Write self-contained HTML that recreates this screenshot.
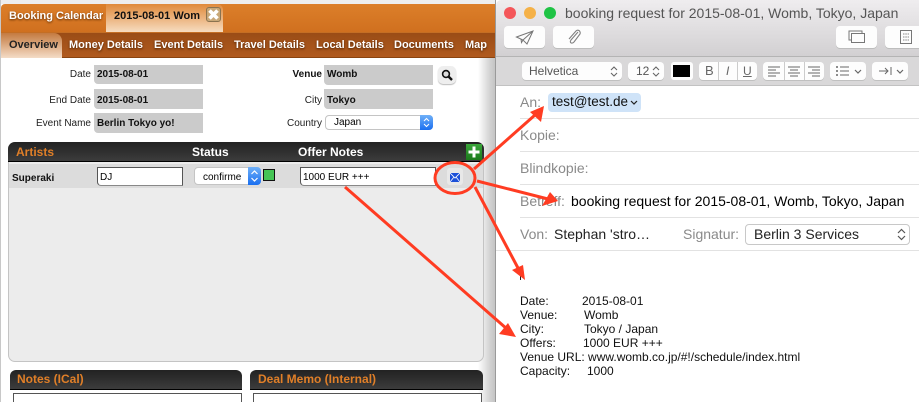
<!DOCTYPE html>
<html><head><meta charset="utf-8"><style>
html,body{margin:0;padding:0}
body{width:919px;height:402px;overflow:hidden;position:relative;background:#fff;font-family:"Liberation Sans",sans-serif;color:#000}
.a{position:absolute;white-space:nowrap}
.tb{font-size:11px;font-weight:bold;color:#fff;text-shadow:0 1px 2px #4a2000;top:38px;line-height:14px}
.lb{font-size:10px;line-height:14px;text-align:right;color:#222}
.ro{position:absolute;background:#cbcbcb;font-size:10px;font-weight:bold;padding-left:3px;box-sizing:border-box;border-bottom-left-radius:4px;color:#111}
.hd{position:absolute;background:linear-gradient(#222,#3c3c3c);font-size:12px;font-weight:bold;color:#e07f28;line-height:20px;box-sizing:border-box;border-bottom:1px solid #000}
.wh{color:#fff}
.inp{position:absolute;background:#fff;border:1px solid #555;border-bottom-color:#888;border-bottom-left-radius:4px;box-sizing:border-box;font-size:10px;line-height:20px;padding-left:2px}
.sel{position:absolute;background:#fff;border:1px solid #c4c4c4;border-radius:4px;box-sizing:border-box;font-size:10px;line-height:14px}
.blue{position:absolute;right:-1px;top:-1px;bottom:-1px;width:13px;background:linear-gradient(#6fb0f8,#1a6ff0);border-radius:0 4px 4px 0;color:#fff}
.m{position:absolute;font-size:14px;line-height:16px;white-space:nowrap}
.g{color:#8a8a8a}
.hr{position:absolute;height:1px;background:#e2e2e2}
.btn{position:absolute;background:#fdfdfd;border-radius:4px;box-shadow:0 1px 0 #bdbdbd}
.fb{position:absolute;background:#fdfdfd;border-radius:4px;top:62px;height:18px;box-shadow:0 1px 0 #c0c0c0;font-size:12px;line-height:18px;color:#555}
.d{position:absolute;left:520px;font-size:12px;line-height:14px;white-space:nowrap;color:#111}
</style></head><body>
<!-- left window -->
<div class="a" style="left:0;top:0;width:495px;height:402px;background:linear-gradient(90deg,#fff 0,#fff 478px,#d2d2d2 490px,#c4c4c4 495px)"></div>
<div class="a" style="left:0;top:0;width:495px;height:4px;background:#eee"></div>
<div class="a" style="left:0;top:0;width:1px;height:402px;background:#c8c8c8"></div>
<div class="a" style="left:1px;top:4px;width:494px;height:28px;background:linear-gradient(#dc7f2a,#d0701f);border-top-left-radius:4px"></div>
<div class="a" style="left:106px;top:4px;width:117px;height:28px;background:linear-gradient(#e08a3a,#f6dcc0);border-radius:0 6px 0 0"></div>
<div class="a" style="left:9px;top:9px;font-size:11px;line-height:14px;font-weight:bold;color:#fff;text-shadow:0 1px 2px #5a2a00">Booking Calendar</div>
<div class="a" style="left:114px;top:9px;font-size:11px;line-height:14px;font-weight:bold;color:#111">2015-08-01 Wom</div>
<div class="a" style="left:206px;top:7px;width:15px;height:15px;background:#c9a878;border:1px solid #8a7350;border-radius:3px;box-sizing:border-box"></div>
<svg class="a" style="left:206px;top:7px" width="15" height="15"><path d="M3.5 3.5 L11.5 11.5 M11.5 3.5 L3.5 11.5" stroke="#fff" stroke-width="3.6"/></svg>
<div class="a" style="left:1px;top:32px;width:494px;height:26px;background:linear-gradient(#9a4c16,#b05a1e);border-top:1px solid #c46e24;border-bottom:1px solid #8a4410;box-sizing:border-box"></div>
<div class="a" style="left:1px;top:33px;width:61px;height:25px;background:linear-gradient(#c47a40,#f4dcc6);border-radius:0 8px 0 0"></div>
<div class="a tb" style="left:9px;color:#222;text-shadow:none">Overview</div>
<div class="a tb" style="left:69px">Money Details</div>
<div class="a tb" style="left:154px">Event Details</div>
<div class="a tb" style="left:234px">Travel Details</div>
<div class="a tb" style="left:316px">Local Details</div>
<div class="a tb" style="left:394px">Documents</div>
<div class="a tb" style="left:465px">Map</div>

<div class="a lb" style="left:30px;width:61px;top:68px">Date</div>
<div class="a lb" style="left:30px;width:61px;top:94px">End Date</div>
<div class="a lb" style="left:20px;width:71px;top:117px">Event Name</div>
<div class="ro" style="left:94px;top:65px;width:109px;height:19px;line-height:20px">2015-08-01</div>
<div class="ro" style="left:94px;top:89px;width:109px;height:20px;line-height:23px">2015-08-01</div>
<div class="ro" style="left:94px;top:113px;width:109px;height:20px;line-height:22px">Berlin Tokyo yo!</div>
<div class="a lb" style="left:262px;width:60px;top:68px;font-weight:bold;color:#111">Venue</div>
<div class="a lb" style="left:262px;width:60px;top:94px">City</div>
<div class="a lb" style="left:262px;width:60px;top:117px">Country</div>
<div class="ro" style="left:324px;top:65px;width:109px;height:20px;line-height:20px">Womb</div>
<div class="ro" style="left:324px;top:89px;width:109px;height:20px;line-height:23px">Tokyo</div>
<div class="sel" style="left:325px;top:115px;width:108px;height:15px;padding-left:8px;line-height:14px">Japan<div class="blue"><svg width="13" height="15" style="display:block"><path d="M4 6 L6.5 3.5 L9 6 M4 9 L6.5 11.5 L9 9" fill="none" stroke="#fff" stroke-width="1"/></svg></div></div>
<div class="a" style="left:438px;top:66px;width:18px;height:18px;background:#eee;border-radius:5px;box-shadow:0 1px 1px #bbb"></div>
<svg class="a" style="left:438px;top:66px" width="18" height="18"><circle cx="8" cy="8" r="3.4" fill="#ddd" stroke="#111" stroke-width="1.6"/><path d="M10.5 10.5 L14 14" stroke="#111" stroke-width="2.4"/></svg>

<!-- artists panel -->
<div class="a" style="left:8px;top:142px;width:476px;height:220px;background:#ececec;border:1px solid #c4c4c4;border-radius:7px;box-sizing:border-box"></div>
<div class="hd" style="left:8px;top:142px;width:476px;height:20px;border-radius:7px 7px 0 0"></div>
<div class="a" style="left:16px;top:142px;font-size:12px;font-weight:bold;line-height:21px;color:#e07f28">Artists</div>
<div class="a wh" style="left:192px;top:142px;font-size:12px;font-weight:bold;line-height:21px">Status</div>
<div class="a wh" style="left:298px;top:142px;font-size:12px;font-weight:bold;line-height:21px">Offer Notes</div>
<div class="a" style="left:466px;top:144px;width:16px;height:16px;background:linear-gradient(#3aa53a,#1c7a1c)"></div>
<svg class="a" style="left:466px;top:144px" width="16" height="16"><path d="M8 2.5 V13.5 M2.5 8 H13.5" stroke="#fff" stroke-width="3"/></svg>
<div class="a" style="left:9px;top:164px;width:474px;height:24px;background:#dcdcdc"></div>
<div class="a" style="left:12px;top:173px;font-size:10px;font-weight:bold;line-height:12px;color:#111">Superaki</div>
<div class="inp" style="left:97px;top:167px;width:86px;height:19px">DJ</div>
<div class="sel" style="left:194px;top:167px;width:67px;height:18px;padding-left:8px;line-height:20px">confirme<div class="blue"><svg width="13" height="18" style="display:block"><path d="M3.5 7 L6.5 4 L9.5 7 M3.5 11 L6.5 14 L9.5 11" fill="none" stroke="#fff" stroke-width="1.2"/></svg></div></div>
<div class="a" style="left:263px;top:169px;width:12px;height:12px;background:#45c455;border:1px solid #111;box-sizing:border-box"></div>
<div class="inp" style="left:300px;top:167px;width:136px;height:19px">1000 EUR +++</div>
<div class="a" style="left:447px;top:168px;width:16px;height:17px;background:#e8e8e8;border-radius:3px"></div>
<svg class="a" style="left:450px;top:173px" width="10" height="9"><rect width="10" height="9" fill="#1c50d8"/><path d="M0 0 L5 5 L10 0 M0 9 L4 4 M10 9 L6 4" fill="none" stroke="#fff" stroke-width=".8"/></svg>

<!-- bottom panels -->
<div class="hd" style="left:10px;top:370px;width:232px;height:20px;border-radius:6px 6px 0 0;padding-left:7px;line-height:19px">Notes (ICal)</div>
<div class="hd" style="left:250px;top:370px;width:233px;height:20px;border-radius:6px 6px 0 0;padding-left:8px;line-height:19px">Deal Memo (Internal)</div>
<div class="a" style="left:13px;top:393px;width:229px;height:9px;background:#fff;border:1px solid #555;border-bottom:none;box-sizing:border-box"></div>
<div class="a" style="left:253px;top:393px;width:229px;height:9px;background:#fff;border:1px solid #555;border-bottom:none;box-sizing:border-box"></div>

<!-- mail window -->
<div class="a" style="left:495px;top:0;width:424px;height:402px;background:#fff;border-left:1px solid #9a9a9a;box-sizing:border-box"></div>
<div class="a" style="left:496px;top:0;width:423px;height:57px;background:linear-gradient(#efedef,#d2d0d2);border-bottom:1px solid #b4b4b4;box-sizing:border-box;border-top-left-radius:5px"></div>
<div class="a" style="left:496px;top:57px;width:423px;height:29px;background:#d9d8d9;border-bottom:1px solid #c2c2c2;box-sizing:border-box"></div>
<div class="a" style="left:504px;top:7px;width:12px;height:12px;border-radius:50%;background:#f4565a"></div>
<div class="a" style="left:524px;top:7px;width:12px;height:12px;border-radius:50%;background:#f5b148"></div>
<div class="a" style="left:544px;top:7px;width:12px;height:12px;border-radius:50%;background:#1fc345"></div>
<div class="a" style="left:565px;top:5px;font-size:14px;line-height:17px;color:#555">booking request for 2015-08-01, Womb, Tokyo, Japan</div>
<div class="btn" style="left:504px;top:26px;width:41px;height:22px"></div>
<div class="btn" style="left:553px;top:26px;width:41px;height:22px"></div>
<div class="btn" style="left:836px;top:26px;width:41px;height:22px"></div>
<div class="btn" style="left:885px;top:26px;width:34px;height:22px;border-radius:4px 0 0 4px"></div>
<svg class="a" style="left:515px;top:30px" width="20" height="15"><path d="M1.5 7 L18 1 L12 14 L8 10 Z M8 10 L18 1 M8 10 L6.5 12.5 L6 9" fill="none" stroke="#777" stroke-width="1"/></svg>
<svg class="a" style="left:566px;top:29px" width="16" height="17"><path d="M12 3 L5 11 C3 14 6 15 8 13 L14 5 C15 2 12 0 10 2 L3 10" fill="none" stroke="#808080" stroke-width="1.1"/></svg>
<svg class="a" style="left:848px;top:30px" width="18" height="14"><rect x="1" y="1" width="13" height="9" fill="none" stroke="#777"/><rect x="3.5" y="3.5" width="13" height="9" fill="#fdfdfd" stroke="#777"/></svg>
<svg class="a" style="left:900px;top:30px" width="13" height="15"><rect x=".5" y=".5" width="11" height="13" fill="none" stroke="#777"/><path d="M3 4 H9 M3 7 H9 M3 10 H9" stroke="#888" stroke-dasharray="1.5 .8"/></svg>

<div class="fb" style="left:522px;width:100px;padding-left:7px;box-sizing:border-box">Helvetica</div>
<div class="fb" style="left:628px;width:36px;padding-left:8px;box-sizing:border-box">12</div>
<svg class="a" style="left:610px;top:65px" width="8" height="13"><path d="M1 5 L4 2 L7 5 M1 8 L4 11 L7 8" fill="none" stroke="#666" stroke-width="1.1"/></svg>
<svg class="a" style="left:652px;top:65px" width="8" height="13"><path d="M1 5 L4 2 L7 5 M1 8 L4 11 L7 8" fill="none" stroke="#666" stroke-width="1.1"/></svg>
<div class="a" style="left:671px;top:62px;width:22px;height:18px;background:#fdfdfd;border-radius:3px"></div>
<div class="a" style="left:673px;top:65px;width:17px;height:12px;background:#000"></div>
<div class="fb" style="left:699px;width:58px"></div>
<div class="a" style="left:718px;top:62px;width:1px;height:18px;background:#ccc"></div><div class="a" style="left:737px;top:62px;width:1px;height:18px;background:#ccc"></div>
<div class="a" style="left:705px;top:63px;font-size:13px;line-height:16px;color:#666">B</div>
<div class="a" style="left:726px;top:63px;font-size:12px;line-height:16px;font-style:italic;color:#666">I</div>
<div class="a" style="left:743px;top:63px;font-size:12px;line-height:16px;text-decoration:underline;color:#666">U</div>
<div class="fb" style="left:763px;width:61px"></div>
<svg class="a" style="left:763px;top:62px" width="61" height="18"><path d="M21.5 0 V18 M41.5 0 V18" stroke="#ccc"/><path d="M5 5 H17 M5 8 H13 M5 11 H17 M5 14 H13 M25 5 H37 M27 8 H35 M25 11 H37 M27 14 H35 M45 5 H57 M49 8 H57 M45 11 H57 M49 14 H57" stroke="#666"/></svg>
<div class="fb" style="left:830px;width:36px"></div>
<svg class="a" style="left:830px;top:62px" width="36" height="18"><path d="M10 5 H19 M10 9 H19 M10 13 H19" stroke="#666"/><path d="M6 5 H8 M6 9 H8 M6 13 H8" stroke="#666" stroke-width="1.5"/><path d="M25 8 L28 11 L31 8" fill="none" stroke="#666" stroke-width="1.2"/></svg>
<div class="fb" style="left:872px;width:36px"></div>
<svg class="a" style="left:872px;top:62px" width="36" height="18"><path d="M7 9 H16 M13 6 L16 9 L13 12 M19 5 V13" fill="none" stroke="#666"/><path d="M25 8 L28 11 L31 8" fill="none" stroke="#666" stroke-width="1.2"/></svg>

<div class="m g" style="left:520px;top:94px">An:</div>
<div class="a" style="left:548px;top:93px;width:93px;height:19px;background:#cfe3f8;border-radius:4px"></div>
<div class="m" style="left:552px;top:94px;color:#111;font-size:13.5px">test@test.de</div>
<svg class="a" style="left:630px;top:99px" width="8" height="7"><path d="M1 2 L4 5 L7 2" fill="none" stroke="#222" stroke-width="1.2"/></svg>
<div class="hr" style="left:520px;top:118px;width:399px"></div>
<div class="m g" style="left:520px;top:127px">Kopie:</div>
<div class="hr" style="left:520px;top:151px;width:399px"></div>
<div class="m g" style="left:520px;top:160px">Blindkopie:</div>
<div class="hr" style="left:520px;top:184px;width:399px"></div>
<div class="m g" style="left:520px;top:193px">Betreff:</div>
<div class="m" style="left:571px;top:193px">booking request for 2015-08-01, Womb, Tokyo, Japan</div>
<div class="hr" style="left:520px;top:217px;width:399px"></div>
<div class="m g" style="left:520px;top:226px">Von:</div>
<div class="m" style="left:554px;top:226px;color:#222">Stephan 'stro…</div>
<div class="m g" style="left:683px;top:226px">Signatur:</div>
<div class="a" style="left:745px;top:224px;width:165px;height:21px;background:#fff;border:1px solid #c8c8c8;border-radius:4px;box-sizing:border-box"></div>
<div class="m" style="left:754px;top:226px;color:#222">Berlin 3 Services</div>
<svg class="a" style="left:897px;top:227px" width="9" height="15"><path d="M1 6 L4.5 2.5 L8 6 M1 9 L4.5 12.5 L8 9" fill="none" stroke="#555" stroke-width="1.2"/></svg>
<div class="hr" style="left:496px;top:250px;width:423px"></div>

<div class="a" style="left:520px;top:274px;width:1px;height:6px;background:#222"></div>
<div class="d" style="top:294px">Date:</div><div class="d" style="top:294px;left:582px">2015-08-01</div>
<div class="d" style="top:308px">Venue:</div><div class="d" style="top:308px;left:584px">Womb</div>
<div class="d" style="top:322px">City:</div><div class="d" style="top:322px;left:584px">Tokyo / Japan</div>
<div class="d" style="top:336px">Offers:</div><div class="d" style="top:336px;left:583px">1000 EUR +++</div>
<div class="d" style="top:350px">Venue URL: www.womb.co.jp/#!/schedule/index.html</div>
<div class="d" style="top:364px">Capacity:</div><div class="d" style="top:364px;left:587px">1000</div>

<!-- red annotations -->
<svg class="a" style="left:0;top:0" width="919" height="402">
<g fill="none" stroke="#ff3c22" stroke-width="3">
<ellipse cx="455" cy="178" rx="20" ry="15.5" stroke-width="3"/>
<path d="M474 169 L535 115"/>
<path d="M477 181 L548 199"/>
<path d="M475 187 L518 268"/>
<path d="M345 187 L507 329"/>
</g>
<g fill="#ff3c22">
<polygon points="544,106 530,112 541,122"/>
<polygon points="558,201 550,192 542,206"/>
<polygon points="525,280 512,270 523,265"/>
<polygon points="516,337 499,334 508,323"/>
</g>
</svg>
</body></html>
